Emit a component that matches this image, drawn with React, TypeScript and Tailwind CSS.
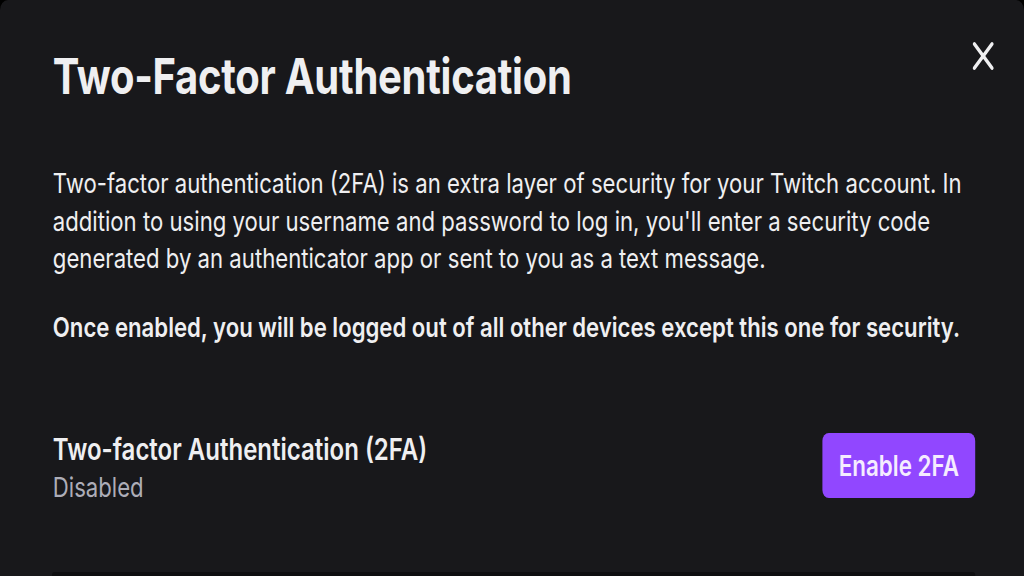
import React from "react";

const CloseIcon = () => (
  <svg width="32" height="30" viewBox="0 0 32 30" fill="none">
    <path d="M5 3L27 27M27 3L5 27" stroke="#efeff1" strokeWidth="4" strokeLinecap="round" />
  </svg>
);

export default function App() {
  return (
    <div className="w-[1024px] h-[576px] overflow-hidden bg-black">
      <div
        className="w-[1280px] h-[576px] origin-top-left scale-x-[0.8] bg-[#18181b] rounded-t-[10px] text-[#efeff1]"
        style={{ fontFamily: "Inter, 'Noto Sans', sans-serif" }}
      >
        <div className="flex flex-col h-full pl-[66px] pr-[61px]">
          {/* Header */}
          <div className="flex justify-between items-start">
            <h1 className="mt-[48px] text-[50px] leading-[56px] font-bold tracking-[-0.35px]">
              Two-Factor Authentication
            </h1>
            <button className="mt-[41px] -mr-[26px]">
              <CloseIcon />
            </button>
          </div>

          {/* Description */}
          <p className="mt-[61px] text-[27.7px] leading-[37.5px] font-normal">
            Two-factor authentication (2FA) is an extra layer of security for your Twitch account. In
            addition to using your username and password to log in, you'll enter a security code
            generated by an authenticator app or sent to you as a text message.
          </p>
          <p className="mt-[31px] text-[27.7px] leading-[37.5px] font-semibold">
            Once enabled, you will be logged out of all other devices except this one for security.
          </p>

          {/* Status row */}
          <div className="mt-[84px] flex justify-between items-start">
            <div className="flex flex-col">
              <span className="text-[30px] leading-[38px] font-semibold">
                Two-factor Authentication (2FA)
              </span>
              <span className="text-[27.7px] leading-[38px] text-[#adadb8]">Disabled</span>
            </div>
            <button className="mt-[3px] w-[191px] h-[65px] rounded-[8px] bg-[#9147ff] text-[28px] font-semibold text-[#f5ecff]">
              Enable 2FA
            </button>
          </div>

          <div className="mt-auto h-[4px] bg-[#0e0e10] rounded-t-[3px] -ml-[1px]" />
        </div>
      </div>
    </div>
  );
}
